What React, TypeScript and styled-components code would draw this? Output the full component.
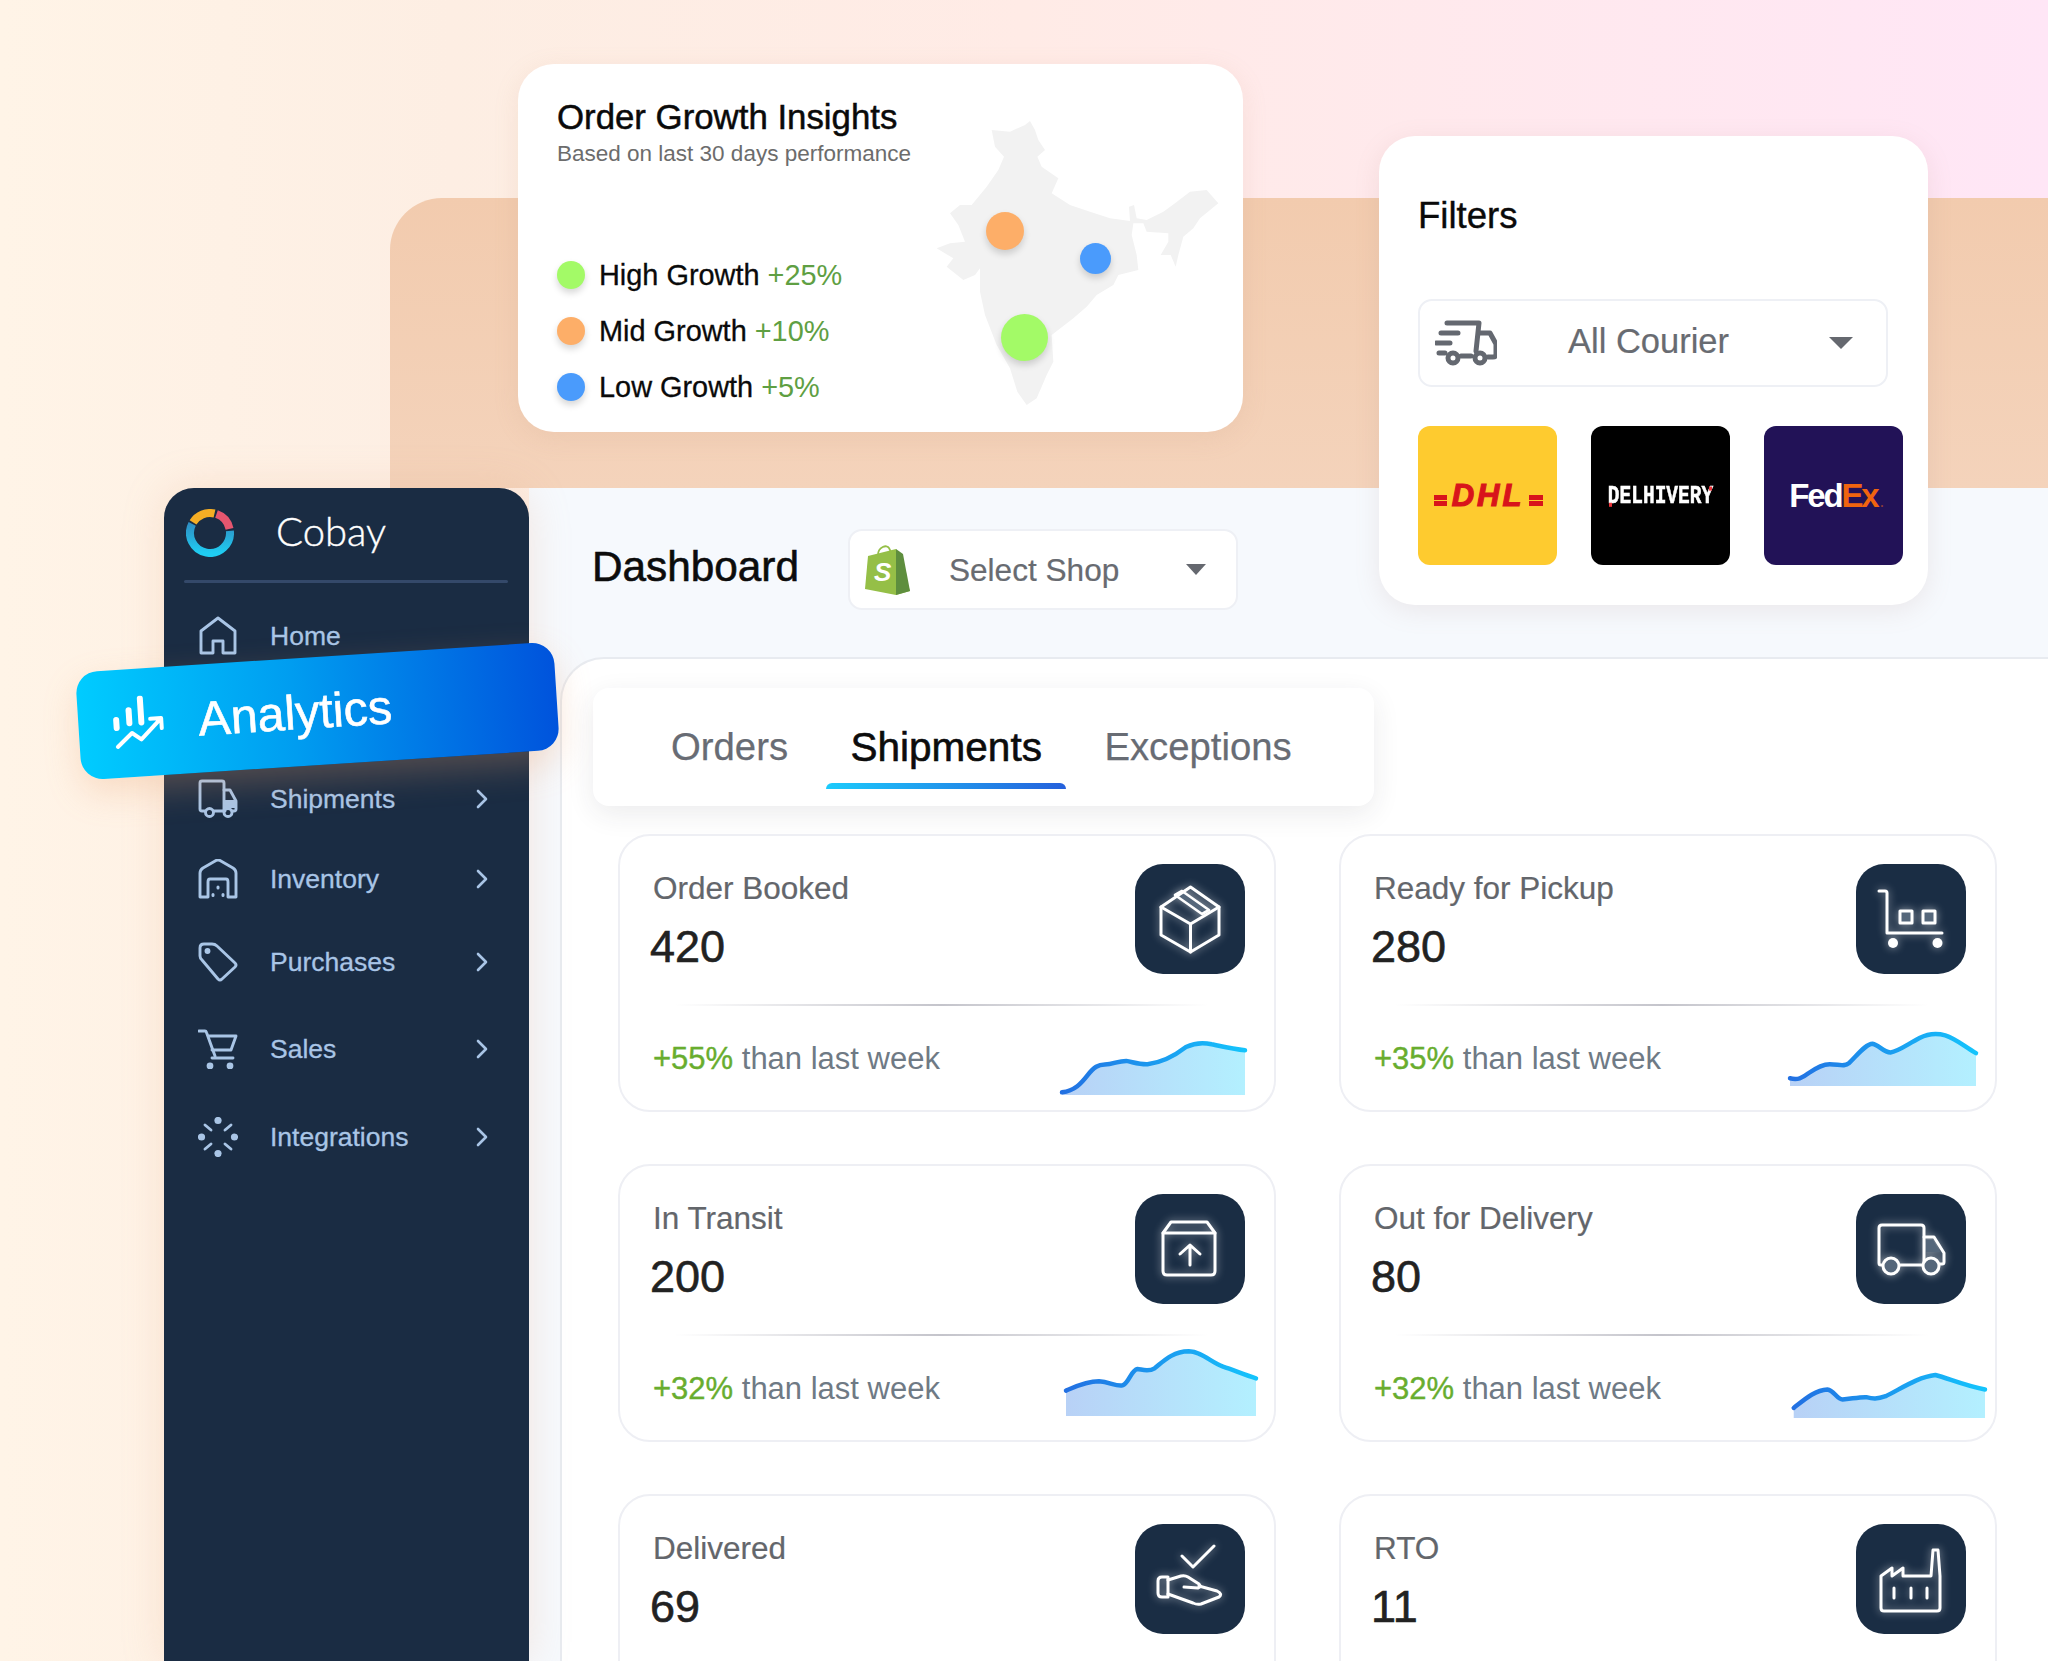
import React from 'react'
import styled, { createGlobalStyle } from 'styled-components'

const GlobalStyle = createGlobalStyle`
  html, body {
    margin: 0;
    padding: 0;
    background: #fff;
  }
  * {
    box-sizing: border-box;
  }
`

const FONT = `"Liberation Sans", Arial, sans-serif`

const Page = styled.div`
  position: relative;
  display: grid;
  grid-template-columns: 164px 365px minmax(0, 1fr);
  grid-template-rows: 198px 290px minmax(0, 1fr);
  width: 2048px;
  height: 1661px;
  overflow: hidden;
  font-family: ${FONT};
  background: linear-gradient(90deg, #fff4e7 0%, #fdeee3 22%, #ffebe6 50%, #ffe6f6 100%);
`

const PeachPanel = styled.div`
  grid-column: 2 / 4;
  grid-row: 2;
  margin-left: 226px;
  border-top-left-radius: 52px;
  background: linear-gradient(180deg, #f2cbae 0%, #f4d3bb 100%);
`

/* ---------- sidebar ---------- */

const Sidebar = styled.aside`
  position: relative;
  z-index: 2;
  grid-column: 2;
  grid-row: 3;
  background: #1a2c43;
  border-radius: 30px 30px 0 0;
  box-shadow: 0 0 40px rgba(230, 170, 130, 0.25);
`

const LogoRow = styled.div`
  display: flex;
  align-items: center;
  gap: 43px;
  height: 92px;
  padding: 0 0 2px 22px;
`

const LogoText = styled.span`
  margin: -5px 0 0 -1px;
  font-family: Lato, sans-serif;
  font-weight: 300;
  font-size: 40px;
  color: #fff;
  -webkit-text-stroke: 0.4px #fff;
`

const SideDivider = styled.div`
  height: 3px;
  margin: 0 21px 0 20px;
  background: #34496a;
  border-radius: 2px;
`

const NavRow = styled.div<{ $mt: number }>`
  display: flex;
  align-items: center;
  height: 44px;
  margin-top: ${({ $mt }) => $mt}px;
  padding: 0 41px 0 34px;
`

const NavLabel = styled.span`
  margin-left: 32px;
  font-size: 26.5px;
  color: #a9c5e6;
  -webkit-text-stroke: 0.3px #a9c5e6;
`

const Chevron = styled.svg`
  width: 12px;
  height: 20px;
  margin-left: auto;
  fill: none;
  stroke: #a9c5e6;
  stroke-width: 2.6;
  stroke-linecap: round;
  stroke-linejoin: round;
`

const NavIcon = styled.svg`
  flex: none;
  width: 40px;
  height: 40px;
  fill: none;
  stroke: #a9c5e6;
  stroke-width: 2.9;
  stroke-linecap: round;
  stroke-linejoin: round;
`

const AnalyticsPill = styled.div`
  position: absolute;
  left: -86px;
  top: 169px;
  display: flex;
  align-items: center;
  gap: 33px;
  width: 479px;
  height: 108px;
  padding: 0 0 0 33px;
  border-radius: 22px;
  transform: rotate(-3.7deg);
  background: linear-gradient(90deg, #00ccff 0%, #009df0 45%, #0053dc 100%);
  box-shadow: 0 14px 34px rgba(235, 160, 110, 0.28);
`

const AnalyticsLabel = styled.span`
  font-size: 48.5px;
  color: #fff;
  -webkit-text-stroke: 0.6px #fff;
`

const AnalyticsIcon = styled.svg`
  flex: none;
  width: 54px;
  height: 54px;
  fill: none;
  stroke: #fff;
  stroke-width: 4;
  stroke-linecap: round;
  stroke-linejoin: round;
`

/* ---------- dashboard ---------- */

const Dashboard = styled.main`
  grid-column: 3;
  grid-row: 3;
  display: flex;
  flex-direction: column;
  min-height: 0;
  background: #f6f9fd;
`

const TopBar = styled.div`
  display: flex;
  flex: none;
  align-items: flex-start;
  height: 169px;
  padding: 41px 0 0 63px;
`

const PageTitle = styled.h1`
  margin: 13px 49px 0 0;
  font-size: 42.3px;
  line-height: 50px;
  font-weight: 400;
  color: #0c0c0c;
  -webkit-text-stroke: 0.6px #0c0c0c;
`

const SelectBox = styled.div<{ $w: number; $h: number; $pl: number; $pr: number; $r: number }>`
  display: flex;
  align-items: center;
  flex: none;
  width: ${({ $w }) => $w}px;
  height: ${({ $h }) => $h}px;
  padding: 0 ${({ $pr }) => $pr}px 0 ${({ $pl }) => $pl}px;
  background: #fff;
  border: 2px solid #eef0f5;
  border-radius: ${({ $r }) => $r}px;
`

const SelectText = styled.span<{ $size: number; $ml: number; $dy: number }>`
  margin-left: ${({ $ml }) => $ml}px;
  margin-top: ${({ $dy }) => $dy}px;
  font-size: ${({ $size }) => $size}px;
  color: #686b71;
  -webkit-text-stroke: 0.2px #686b71;
`

const Caret = styled.span<{ $w: number; $h: number }>`
  width: 0;
  height: 0;
  margin-left: auto;
  border-left: ${({ $w }) => $w / 2}px solid transparent;
  border-right: ${({ $w }) => $w / 2}px solid transparent;
  border-top: ${({ $h }) => $h}px solid #65686f;
`

const ContentPanel = styled.section`
  flex: 1;
  min-height: 0;
  margin-left: 31px;
  padding: 29px 0 0 31px;
  background: #fff;
  border-top: 2px solid #e8ebf0;
  border-left: 2px solid #e8ebf0;
  border-top-left-radius: 44px;
`

const TabBar = styled.div`
  display: flex;
  gap: 13px;
  width: 781px;
  height: 118px;
  padding-left: 53px;
  background: #fff;
  border-radius: 16px;
  box-shadow: 0 8px 28px rgba(40, 40, 60, 0.09);
`

const Tab = styled.div<{ $active?: boolean }>`
  position: relative;
  padding: 0 ${({ $active }) => ($active ? 24.5 : 25)}px;
  font-size: ${({ $active }) => ($active ? 40.5 : 38.3)}px;
  line-height: 118px;
  color: ${({ $active }) => ($active ? '#0c0c0c' : '#686c74')};
  -webkit-text-stroke: ${({ $active }) => ($active ? '0.6px #0c0c0c' : '0.25px #686c74')};

  ${({ $active }) =>
    $active &&
    `
    &::after {
      content: '';
      position: absolute;
      left: 0;
      right: 0;
      top: 95px;
      height: 6px;
      border-radius: 6px 6px 0 0;
      background: linear-gradient(90deg, #1ccbfc, #2560dc);
    }
  `}
`

const CardGrid = styled.div`
  display: grid;
  grid-template-columns: 658px 658px;
  grid-auto-rows: 278px;
  column-gap: 63px;
  row-gap: 52px;
  margin: 28px 0 0 25px;
`

const Card = styled.article`
  display: flex;
  flex-direction: column;
  background: #fff;
  border: 2px solid #eeeff4;
  border-radius: 32px;
`

const CardTop = styled.div`
  display: flex;
  justify-content: space-between;
  padding: 28px 29px 0 33px;
`

const CardLabel = styled.div`
  margin-top: 7px;
  font-size: 31.5px;
  line-height: 34px;
  color: #63666b;
  -webkit-text-stroke: 0.2px #63666b;
`

const CardValue = styled.div`
  margin: 16px 0 0 -3px;
  font-size: 45px;
  line-height: 52px;
  color: #222;
  -webkit-text-stroke: 0.6px #222;
`

const IconTile = styled.div`
  width: 110px;
  height: 110px;
  background: #1a2d44;
  border-radius: 28px;
`

const GlowIcon = styled.svg`
  display: block;
  width: 110px;
  height: 110px;
  fill: none;
  stroke: #fff;
  stroke-width: 3;
  stroke-linecap: round;
  stroke-linejoin: round;
  filter: drop-shadow(0 0 4px rgba(255, 255, 255, 0.55));
`

const CardRule = styled.div`
  height: 2px;
  margin: 30px 66px 0 54px;
  background: linear-gradient(90deg, rgba(190, 190, 198, 0), #c4c4cb 50%, rgba(190, 190, 198, 0));
`

const CardFooter = styled.div`
  display: flex;
  justify-content: space-between;
  align-items: flex-start;
  padding-left: 33px;
`

const Trend = styled.div`
  margin-top: 35px;
  font-size: 31px;
  line-height: 36px;
  color: #6f7a85;
`

const TrendUp = styled.span`
  color: #68ad2e;
  -webkit-text-stroke: 0.4px #68ad2e;
`

const Spark = styled.svg<{ $w: number; $h: number; $mt: number; $mr: number }>`
  flex: none;
  width: ${({ $w }) => $w}px;
  height: ${({ $h }) => $h}px;
  margin: ${({ $mt }) => $mt}px ${({ $mr }) => $mr}px 0 0;
  overflow: visible;
`

/* ---------- floating cards ---------- */

const InsightCard = styled.section`
  position: absolute;
  left: 518px;
  top: 64px;
  width: 725px;
  height: 368px;
  padding: 33px 0 0 39px;
  background: #fff;
  border-radius: 36px;
  box-shadow: 0 6px 26px rgba(200, 150, 120, 0.14);
`

const InsightTitle = styled.h2`
  margin: 0;
  font-size: 34.8px;
  line-height: 40px;
  font-weight: 400;
  color: #0a0a0a;
  -webkit-text-stroke: 0.5px #0a0a0a;
`

const InsightSub = styled.p`
  margin: 2px 0 0;
  font-size: 22.5px;
  line-height: 30px;
  color: #6c6c6c;
`

const LegendList = styled.div`
  margin-top: 78px;
`

const LegendRow = styled.div`
  display: flex;
  align-items: center;
  gap: 14px;
  height: 56px;
  font-size: 28.9px;
  color: #0a0a0a;
  -webkit-text-stroke: 0.3px #0a0a0a;
`

const LegendGrowth = styled.span`
  color: #5f9f43;
  -webkit-text-stroke: 0;
`

const Dot = styled.span<{ $c: string; $d: number }>`
  flex: none;
  width: ${({ $d }) => $d}px;
  height: ${({ $d }) => $d}px;
  border-radius: 50%;
  background: ${({ $c }) => $c};
  box-shadow: 0 4px 7px rgba(0, 0, 0, 0.16);
`

const MapWrap = styled.div`
  position: absolute;
  left: 417px;
  top: 56px;
  width: 288px;
  height: 287px;
`

const MapShape = styled.svg`
  display: block;
  width: 288px;
  height: 287px;
  fill: #f2f2f2;
`

const MapPin = styled(Dot)<{ $x: number; $y: number }>`
  position: absolute;
  left: ${({ $x, $d }) => $x - $d / 2}px;
  top: ${({ $y, $d }) => $y - $d / 2}px;
`

const FilterCard = styled.section`
  position: absolute;
  left: 1379px;
  top: 136px;
  width: 549px;
  height: 469px;
  padding: 58px 0 0 39px;
  background: #fff;
  border-radius: 36px;
  box-shadow: 0 6px 26px rgba(170, 130, 120, 0.14);
`

const FilterTitle = styled.h2`
  margin: 0 0 61px;
  font-size: 36.6px;
  line-height: 44px;
  font-weight: 400;
  color: #0a0a0a;
  -webkit-text-stroke: 0.4px #0a0a0a;
`

const CourierRow = styled.div`
  display: flex;
  gap: 34px;
  margin-top: 39px;
`

const CourierTile = styled.div<{ $bg: string }>`
  display: flex;
  align-items: center;
  justify-content: center;
  width: 139px;
  height: 139px;
  border-radius: 12px;
  background: ${({ $bg }) => $bg};
`

const DhlMark = styled.div`
  display: flex;
  align-items: center;
  justify-content: center;
  width: 109px;
  height: 22px;
  margin-left: 1px;
  background: repeating-linear-gradient(180deg, #d8141b 0 5px, transparent 5px 6px) 0 10px / 100% 11px no-repeat;
`

const DhlText = styled.span`
  padding: 0 5px 0 5px;
  background: #fecb2f;
  font-size: 31px;
  line-height: 22px;
  font-weight: 700;
  font-style: italic;
  letter-spacing: 3px;
  color: #d8141b;
  -webkit-text-stroke: 1.2px #d8141b;
`

const DelhiveryText = styled.span`
  position: relative;
  display: block;
  font-family: "Liberation Mono", monospace;
  font-size: 19.5px;
  line-height: 20px;
  font-weight: 700;
  color: #fff;
  transform: scaleY(1.35);
  -webkit-text-stroke: 0.4px #fff;

  &::before,
  &::after {
    content: '';
    position: absolute;
    width: 3px;
    height: 3px;
    background: #e9343a;
  }
  &::before {
    left: 1px;
    bottom: 2px;
  }
  &::after {
    right: 1px;
    top: 3px;
  }
`

const FedexText = styled.span`
  padding-left: 6px;
  font-size: 33px;
  font-weight: 700;
  letter-spacing: -2.2px;
  color: #fff;
`

const FedexEx = styled.span`
  color: #f0640f;
`

const FedexDot = styled.span`
  margin-left: 3px;
  font-size: 12px;
  letter-spacing: 0;
  color: #8a3a38;
`

const FastTruck = styled.svg`
  flex: none;
  width: 62px;
  height: 46px;
  fill: none;
  stroke: #646870;
  stroke-width: 5;
  stroke-linecap: round;
  stroke-linejoin: round;
`

const ShopBag = styled.svg`
  flex: none;
  width: 45px;
  height: 50px;
`

const ringArc = (start: number, end: number) => {
  const p = (deg: number) => {
    const a = ((deg - 90) * Math.PI) / 180
    return `${(24 + 20 * Math.cos(a)).toFixed(2)} ${(24 + 20 * Math.sin(a)).toFixed(2)}`
  }
  return `M${p(start)} A20 20 0 ${end - start > 180 ? 1 : 0} 1 ${p(end)}`
}

const LogoRing = () => (
  <svg width="48" height="48" viewBox="0 0 48 48" fill="none" strokeWidth="8" style={{ flex: 'none' }}>
    <defs>
      <linearGradient id="ringBlue" x1="0" y1="0" x2="0" y2="1">
        <stop offset="0" stopColor="#2e8fc4" />
        <stop offset="1" stopColor="#1fcdf2" />
      </linearGradient>
    </defs>
    <path d={ringArc(84, 297)} stroke="url(#ringBlue)" />
    <path d={ringArc(-58, 13)} stroke="#f5ae25" />
    <path d={ringArc(19, 78)} stroke="#e6566f" />
  </svg>
)

const navIcons: Record<string, React.ReactNode> = {
  Home: (
    <path d="M3 37 V15 L20 2 L37 15 V37 H25 V25 H15 V37 Z" />
  ),
  Shipments: (
    <>
      <path d="M7 32 H4 Q2 32 2 30 V4 Q2 2 4 2 H24 Q26 2 26 4 V32 H16" />
      <path d="M26 11 H32 L38 22 V30 Q38 32 36 32 H34 M26 32 H27" />
      <path d="M27 21 H38 V29 H27 Z" fill="#a9c5e6" stroke="none" />
      <circle cx="11.5" cy="33.5" r="4" />
      <circle cx="30" cy="33.5" r="4" />
    </>
  ),
  Inventory: (
    <>
      <path d="M2 38 V14 Q2 11 5 9 L18 1.5 Q20 .5 22 1.5 L35 9 Q38 11 38 14 V38 H30 V23 Q30 20 28 20 H12 Q10 20 10 23 V38 Z" />
      <path d="M20 28 V29 M15 35.5 V36.5 M25 35.5 V36.5" strokeWidth="3" />
    </>
  ),
  Purchases: (
    <>
      <path d="M2 6 Q2 2 6 2 L14 2 Q17 2 19 4 L37 21 Q39 23 37 25 L24 37 Q22 39 20 37 L4 18 Q2 16 2 14 Z" />
      <circle cx="9.5" cy="9" r="1.5" fill="#a9c5e6" />
    </>
  ),
  Sales: (
    <>
      <path d="M1 2 H7 Q8 2 8.5 3.5 L17 27" />
      <path d="M11 7 H38 L33 21 H14" />
      <path d="M14 29 H35" />
      <circle cx="12" cy="37" r="3.4" fill="#a9c5e6" stroke="none" />
      <circle cx="32" cy="37" r="3.4" fill="#a9c5e6" stroke="none" />
    </>
  ),
  Integrations: (
    <>
      <circle cx="20" cy="3.5" r="3.6" fill="#a9c5e6" stroke="none" />
      <circle cx="20" cy="36.5" r="3.6" fill="#a9c5e6" stroke="none" />
      <circle cx="3.5" cy="20" r="3.6" fill="#a9c5e6" stroke="none" />
      <circle cx="36.5" cy="20" r="3.6" fill="#a9c5e6" stroke="none" />
      <path d="M7 8 L13 13 M33 8 L27 13 M7 32 L13 27 M33 32 L27 27" />
    </>
  ),
}

const NAV = [
  { label: 'Home', mt: 31, more: false },
  { label: 'Shipments', mt: 119, more: true },
  { label: 'Inventory', mt: 36, more: true },
  { label: 'Purchases', mt: 39, more: true },
  { label: 'Sales', mt: 43, more: true },
  { label: 'Integrations', mt: 44, more: true },
]

const TILE_ICONS: Record<string, React.ReactNode> = {
  box: (
    <>
      <path d="M40 31 L67 50 L74 46 L47 27 Z" fill="#55677b" strokeWidth="2.6" />
      <path d="M55.5 23 L84 43 V71 L55.5 88 L26 71 V43 Z" />
      <path d="M26 43 L55.5 60 L84 43 M55.5 60 V88" />
    </>
  ),
  cart: (
    <>
      <path d="M23 27 H29 Q31 27 31 29 V69 H86" />
      <path d="M44 47 H56 V59 H44 Z M67 47 H79 V59 H67 Z" fill="#55677b" />
      <circle cx="37" cy="79" r="5" fill="#fff" stroke="none" />
      <circle cx="81.5" cy="79" r="5" fill="#fff" stroke="none" />
    </>
  ),
  upload: (
    <>
      <path d="M36 28 H72 L80 39 V77 Q80 81 76 81 H32 Q28 81 28 77 V39 Z" />
      <path d="M28 39 H80" />
      <path d="M55 71 V51 M45 60 L55 51 L65 60" />
    </>
  ),
  truck: (
    <>
      <path d="M27 71 H25 Q23 71 23 69 V34 Q23 31 26 31 H65 Q68 31 68 34 V71 H43" />
      <path d="M68 43 H78 L88 59 V68 Q88 70 86 70 H83 M67 71 H68" />
      <path d="M70 46 H77 L84 58 H70 Z" fill="#55677b" stroke="none" />
      <circle cx="35" cy="72" r="8" fill="#55677b" />
      <circle cx="75" cy="72" r="8" fill="#55677b" />
    </>
  ),
  hand: (
    <>
      <path d="M47 32 L58 43 L79 22" />
      <path d="M27 53 H33 V73 H27 Q23 73 23 69 V57 Q23 53 27 53 Z" />
      <path d="M33 56 L46 52 Q50 51 53 53 L64 60 Q67 63 63 64 L49 63" />
      <path d="M64 62 L82 67 Q88 70 84 73 L66 80 Q62 81 58 79 L33 70" />
    </>
  ),
  factory: (
    <>
      <path d="M25 84 V52 L36 44 V52 L47 44 V52 H75 L77 26 H82 L84 52 V84 Q84 87 81 87 H28 Q25 87 25 84 Z" />
      <path d="M38 64 V74 M55 64 V74 M71 64 V74" />
    </>
  ),
}

const STATS = [
  {
    label: 'Order Booked', value: '420', icon: 'box', pct: '+55%',
    spark: { vb: '1040 632 428 163', w: 183, h: 54, mt: 35, mr: 29, id: 'a', base: 795,
      d: 'M1040 787 C1070 782,1085 760,1100 735 C1115 710,1125 703,1140 703 C1160 703,1170 692,1190 692 C1205 695,1220 703,1240 702 C1265 698,1300 680,1330 650 C1350 638,1370 636,1390 642 C1420 650,1445 657,1468 660' },
  },
  {
    label: 'Ready for Pickup', value: '280', icon: 'cart', pct: '+35%',
    spark: { vb: '1057 610 435 158', w: 186, h: 53, mt: 27, mr: 19, id: 'b', base: 768,
      d: 'M1057 745 C1075 750,1085 745,1100 730 C1120 712,1135 703,1150 703 C1170 703,1185 712,1195 700 C1215 675,1235 642,1250 642 C1265 645,1275 668,1292 668 C1310 665,1330 645,1360 625 C1380 612,1400 610,1420 617 C1445 627,1465 650,1492 670' },
  },
  {
    label: 'In Transit', value: '200', icon: 'upload', pct: '+32%',
    spark: { vb: '1048 570 444 198', w: 190, h: 66, mt: 14, mr: 18, id: 'c', base: 768,
      d: 'M1048 692 C1070 680,1095 664,1125 664 C1150 666,1165 680,1180 676 C1195 670,1200 630,1215 627 C1225 628,1240 637,1255 625 C1275 605,1295 575,1335 574 C1365 575,1385 605,1415 620 C1440 630,1465 645,1492 655' },
  },
  {
    label: 'Out for Delivery', value: '80', icon: 'truck', pct: '+32%',
    spark: { vb: '1068 642 447 131', w: 193, h: 44, mt: 38, mr: 10, id: 'd', base: 773,
      d: 'M1072 743 C1095 720,1120 690,1150 688 C1165 690,1172 718,1185 718 C1205 716,1225 710,1240 711 C1255 716,1265 717,1285 708 C1315 690,1360 650,1400 645 C1430 655,1470 678,1515 688' },
  },
  { label: 'Delivered', value: '69', icon: 'hand' },
  { label: 'RTO', value: '11', icon: 'factory' },
]

const MAP_PATH =
  'M300 18 L315 45 L325 75 L345 105 L322 125 L335 155 L385 190 L365 235 L420 270 L480 290 L540 310 L600 318 L597 275 L612 270 L620 310 L650 315 L700 290 L735 265 L780 230 L830 225 L865 265 L810 310 L790 340 L760 365 L745 420 L737 455 L722 420 L692 420 L715 380 L715 355 L650 350 L640 325 L610 325 L605 360 L620 420 L625 465 L565 480 L550 510 L500 540 L470 575 L430 610 L365 660 L370 740 L350 780 L320 850 L290 870 L262 830 L240 760 L200 690 L165 600 L150 530 L150 460 L135 480 L100 495 L50 455 L70 430 L20 400 L60 385 L105 380 L85 330 L60 295 L90 270 L125 270 L170 215 L205 165 L222 125 L195 95 L185 45 L240 50 L285 30 Z'

export default function App() {
  return (
    <Page>
      <GlobalStyle />
      <PeachPanel />

      <Sidebar>
        <LogoRow>
          <LogoRing />
          <LogoText>Cobay</LogoText>
        </LogoRow>
        <SideDivider />
        {NAV.map((item) => (
          <NavRow key={item.label} $mt={item.mt}>
            <NavIcon viewBox="0 0 40 40">{navIcons[item.label]}</NavIcon>
            <NavLabel>{item.label}</NavLabel>
            {item.more && (
              <Chevron viewBox="0 0 12 20">
                <path d="M2 2 L10 10 L2 18" />
              </Chevron>
            )}
          </NavRow>
        ))}
        <AnalyticsPill>
          <AnalyticsIcon viewBox="0 0 54 54">
            <path d="M5 23 V31" strokeWidth="6" />
            <path d="M18 14 V27" strokeWidth="6" />
            <path d="M30 3 V27" strokeWidth="6" />
            <path d="M5 50 L20 37 L29 44 L49 25 M39 24 H50 V34" />
          </AnalyticsIcon>
          <AnalyticsLabel>Analytics</AnalyticsLabel>
        </AnalyticsPill>
      </Sidebar>

      <Dashboard>
        <TopBar>
          <PageTitle>Dashboard</PageTitle>
          <SelectBox $w={390} $h={81} $pl={15} $pr={30} $r={14}>
            <ShopBag viewBox="0 0 45 50">
              <path d="M3 11 L31 4 L45 46 L31 50 L0 44 Z" fill="#95bf47" />
              <path d="M31 4 L38 9 L45 46 L31 50 Z" fill="#5e8e3e" />
              <path d="M13 10 C13 2,22 -1,24 3 C26 6,26 8,26 9" fill="none" stroke="#95bf47" strokeWidth="1.8" />
              <text x="9" y="36" fontFamily={FONT} fontSize="26" fontWeight="700" fontStyle="italic" fill="#fff">
                S
              </text>
            </ShopBag>
            <SelectText $size={31.6} $ml={39} $dy={2}>Select Shop</SelectText>
            <Caret $w={20} $h={11} />
          </SelectBox>
        </TopBar>

        <ContentPanel>
          <TabBar>
            <Tab>Orders</Tab>
            <Tab $active>Shipments</Tab>
            <Tab>Exceptions</Tab>
          </TabBar>
          <CardGrid>
            {STATS.map((s) => (
              <Card key={s.label}>
                <CardTop>
                  <div>
                    <CardLabel>{s.label}</CardLabel>
                    <CardValue>{s.value}</CardValue>
                  </div>
                  <IconTile>
                    <GlowIcon viewBox="0 0 110 110">{TILE_ICONS[s.icon]}</GlowIcon>
                  </IconTile>
                </CardTop>
                <CardRule />
                {s.spark && (
                  <CardFooter>
                    <Trend>
                      <TrendUp>{s.pct}</TrendUp> than last week
                    </Trend>
                    <Spark
                      viewBox={s.spark.vb}
                      preserveAspectRatio="none"
                      $w={s.spark.w}
                      $h={s.spark.h}
                      $mt={s.spark.mt}
                      $mr={s.spark.mr}
                    >
                      <defs>
                        <linearGradient id={`fill-${s.spark.id}`} x1="0" y1="0" x2="1" y2="0">
                          <stop offset="0" stopColor="#b8d1f6" />
                          <stop offset="1" stopColor="#b3f0ff" />
                        </linearGradient>
                        <linearGradient id={`line-${s.spark.id}`} x1="0" y1="0" x2="1" y2="0">
                          <stop offset="0" stopColor="#2270e2" />
                          <stop offset="1" stopColor="#14c4fc" />
                        </linearGradient>
                      </defs>
                      <path
                        d={`${s.spark.d} V${s.spark.base} H${s.spark.d.split(' ')[0].slice(1)} Z`}
                        fill={`url(#fill-${s.spark.id})`}
                      />
                      <path
                        d={s.spark.d}
                        fill="none"
                        stroke={`url(#line-${s.spark.id})`}
                        strokeWidth="4.5"
                        strokeLinecap="round"
                        vectorEffect="non-scaling-stroke"
                      />
                    </Spark>
                  </CardFooter>
                )}
              </Card>
            ))}
          </CardGrid>
        </ContentPanel>
      </Dashboard>

      <InsightCard>
        <InsightTitle>Order Growth Insights</InsightTitle>
        <InsightSub>Based on last 30 days performance</InsightSub>
        <LegendList>
          <LegendRow>
            <Dot $c="#a3fa67" $d={28} />
            <span>High Growth <LegendGrowth>+25%</LegendGrowth></span>
          </LegendRow>
          <LegendRow>
            <Dot $c="#fdae68" $d={28} />
            <span>Mid Growth <LegendGrowth>+10%</LegendGrowth></span>
          </LegendRow>
          <LegendRow>
            <Dot $c="#4a9bfc" $d={28} />
            <span>Low Growth <LegendGrowth>+5%</LegendGrowth></span>
          </LegendRow>
        </LegendList>
        <MapWrap>
          <MapShape viewBox="15 15 864 861">
            <path d={MAP_PATH} />
          </MapShape>
          <MapPin $c="#fdae68" $d={38} $x={70} $y={111} />
          <MapPin $c="#4a9bfc" $d={31} $x={160} $y={138} />
          <MapPin $c="#a3fa67" $d={47} $x={89} $y={217} />
        </MapWrap>
      </InsightCard>

      <FilterCard>
        <FilterTitle>Filters</FilterTitle>
        <SelectBox $w={470} $h={88} $pl={15} $pr={33} $r={14}>
          <FastTruck viewBox="0 0 62 46">
            <path d="M12 3 H44 L41 31 M26 36 H36" />
            <path d="M45 13 H55 L61 24 V34 Q61 37 58 37 H53" />
            <path d="M6 13 H23 M1 23 H15 M4 33 H10" />
            <circle cx="18" cy="38" r="5" />
            <circle cx="45" cy="38" r="5" />
          </FastTruck>
          <SelectText $size={34.5} $ml={71} $dy={-4}>All Courier</SelectText>
          <Caret $w={24} $h={12} />
        </SelectBox>
        <CourierRow>
          <CourierTile $bg="#fecb2f">
            <DhlMark>
              <DhlText>DHL</DhlText>
            </DhlMark>
          </CourierTile>
          <CourierTile $bg="#000">
            <DelhiveryText>DELHIVERY</DelhiveryText>
          </CourierTile>
          <CourierTile $bg="#221257">
            <FedexText>
              Fed<FedexEx>Ex</FedexEx>
              <FedexDot>.</FedexDot>
            </FedexText>
          </CourierTile>
        </CourierRow>
      </FilterCard>
    </Page>
  )
}
